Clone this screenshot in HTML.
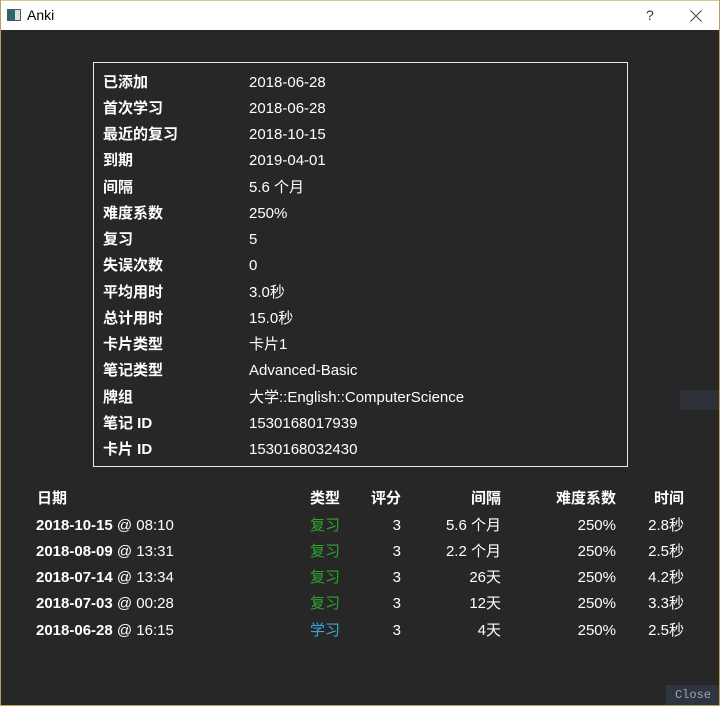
<!DOCTYPE html>
<html><head><meta charset="utf-8"><style>
*{margin:0;padding:0;box-sizing:border-box}
body{width:720px;height:706px;background:#272727;font-family:"Liberation Sans","Noto Sans CJK SC",sans-serif;color:#fff;position:relative;overflow:hidden}
.frame{position:absolute;inset:0;border:1px solid #b8a25a;border-top:none;pointer-events:none}
.title{position:absolute;left:0;top:0;width:720px;height:30px;background:#fff;border-top:1px solid #d8c98a;color:#000;font-size:13px}
.box{position:absolute;left:93px;top:62px;width:535px;height:405px;border:1px solid #e8e8e8}
.r{position:absolute;font-size:15px;line-height:20px;white-space:nowrap;margin-top:1px}
.b{font-weight:bold}
.g{color:#2fa52f}.bl{color:#3ba9d8}
</style></head><body>
<div class="title">
<div style="position:absolute;left:7px;top:8px;width:14px;height:12px;border:1px solid #556;background:linear-gradient(90deg,#2a6a6a 60%,#ddd 60%)"></div>
<div style="position:absolute;left:27px;top:6px;font-size:14px">Anki</div>
<div style="position:absolute;left:646px;top:6px;font-size:14px;color:#333">?</div>
<svg style="position:absolute;left:690px;top:9px" width="12" height="12"><path d="M0.5 0.5L11.5 11.5M11.5 0.5L0.5 11.5" stroke="#444" stroke-width="1"/></svg>
</div>
<div class="box"></div>
<div class="r b" style="left:103px;top:72px">已添加</div><div class="r" style="left:249px;top:72px">2018-06-28</div>
<div class="r b" style="left:103px;top:98px">首次学习</div><div class="r" style="left:249px;top:98px">2018-06-28</div>
<div class="r b" style="left:103px;top:124px">最近的复习</div><div class="r" style="left:249px;top:124px">2018-10-15</div>
<div class="r b" style="left:103px;top:150px">到期</div><div class="r" style="left:249px;top:150px">2019-04-01</div>
<div class="r b" style="left:103px;top:177px">间隔</div><div class="r" style="left:249px;top:177px">5.6 个月</div>
<div class="r b" style="left:103px;top:203px">难度系数</div><div class="r" style="left:249px;top:203px">250%</div>
<div class="r b" style="left:103px;top:229px">复习</div><div class="r" style="left:249px;top:229px">5</div>
<div class="r b" style="left:103px;top:255px">失误次数</div><div class="r" style="left:249px;top:255px">0</div>
<div class="r b" style="left:103px;top:282px">平均用时</div><div class="r" style="left:249px;top:282px">3.0秒</div>
<div class="r b" style="left:103px;top:308px">总计用时</div><div class="r" style="left:249px;top:308px">15.0秒</div>
<div class="r b" style="left:103px;top:334px">卡片类型</div><div class="r" style="left:249px;top:334px">卡片1</div>
<div class="r b" style="left:103px;top:360px">笔记类型</div><div class="r" style="left:249px;top:360px">Advanced-Basic</div>
<div class="r b" style="left:103px;top:387px">牌组</div><div class="r" style="left:249px;top:387px">大学::English::ComputerScience</div>
<div class="r b" style="left:103px;top:413px">笔记 ID</div><div class="r" style="left:249px;top:413px">1530168017939</div>
<div class="r b" style="left:103px;top:439px">卡片 ID</div><div class="r" style="left:249px;top:439px">1530168032430</div>

<div class="r b" style="left:37px;top:488px">日期</div>
<div class="r b" style="left:310px;top:488px">类型</div>
<div class="r b" style="right:319px;top:488px">评分</div>
<div class="r b" style="right:219px;top:488px">间隔</div>
<div class="r b" style="right:104px;top:488px">难度系数</div>
<div class="r b" style="right:36px;top:488px">时间</div>

<div class="r" style="left:36px;top:515px"><b>2018-10-15</b> @ 08:10</div><div class="r g" style="left:310px;top:515px">复习</div><div class="r" style="right:319px;top:515px">3</div><div class="r" style="right:219px;top:515px">5.6 个月</div><div class="r" style="right:104px;top:515px">250%</div><div class="r" style="right:36px;top:515px">2.8秒</div>
<div class="r" style="left:36px;top:541px"><b>2018-08-09</b> @ 13:31</div><div class="r g" style="left:310px;top:541px">复习</div><div class="r" style="right:319px;top:541px">3</div><div class="r" style="right:219px;top:541px">2.2 个月</div><div class="r" style="right:104px;top:541px">250%</div><div class="r" style="right:36px;top:541px">2.5秒</div>
<div class="r" style="left:36px;top:567px"><b>2018-07-14</b> @ 13:34</div><div class="r g" style="left:310px;top:567px">复习</div><div class="r" style="right:319px;top:567px">3</div><div class="r" style="right:219px;top:567px">26天</div><div class="r" style="right:104px;top:567px">250%</div><div class="r" style="right:36px;top:567px">4.2秒</div>
<div class="r" style="left:36px;top:593px"><b>2018-07-03</b> @ 00:28</div><div class="r g" style="left:310px;top:593px">复习</div><div class="r" style="right:319px;top:593px">3</div><div class="r" style="right:219px;top:593px">12天</div><div class="r" style="right:104px;top:593px">250%</div><div class="r" style="right:36px;top:593px">3.3秒</div>
<div class="r" style="left:36px;top:620px"><b>2018-06-28</b> @ 16:15</div><div class="r bl" style="left:310px;top:620px">学习</div><div class="r" style="right:319px;top:620px">3</div><div class="r" style="right:219px;top:620px">4天</div><div class="r" style="right:104px;top:620px">250%</div><div class="r" style="right:36px;top:620px">2.5秒</div>

<div style="position:absolute;left:680px;top:390px;width:40px;height:20px;background:#2e3238"></div>
<div style="position:absolute;left:666px;top:685px;width:54px;height:21px;background:#2f3540;color:#9aa;font-family:'Liberation Mono',monospace;font-size:12px;line-height:21px;text-align:center">Close</div>
<div class="frame"></div>
</body></html>
